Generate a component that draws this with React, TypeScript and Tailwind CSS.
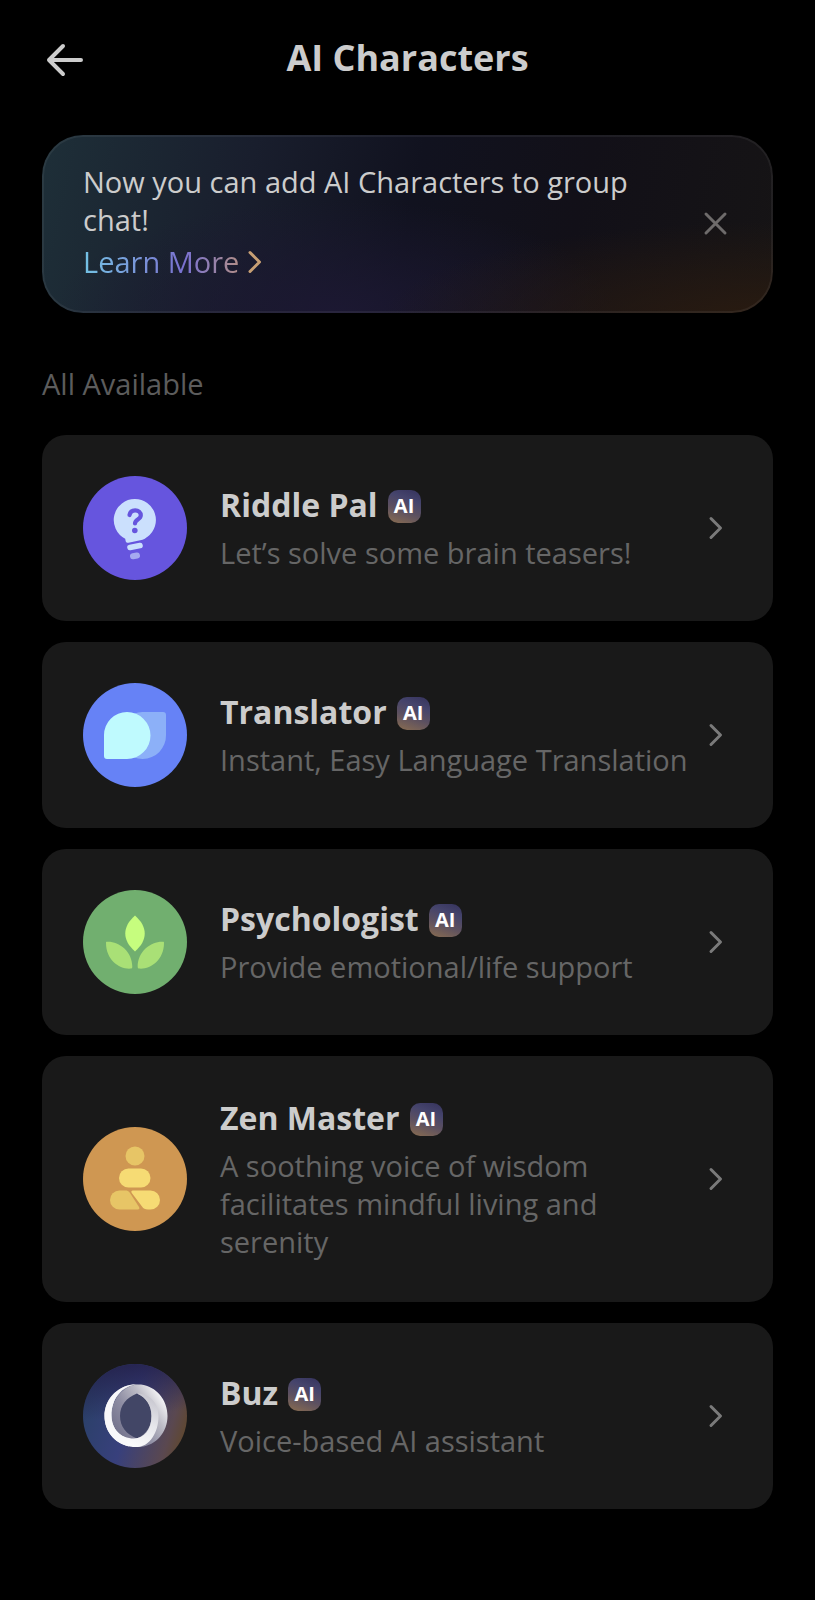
import type { ReactNode } from "react";

type Character = {
  name: string;
  description: string;
  avatar: ReactNode;
};

function RiddleAvatar() {
  return (
    <svg viewBox="0 0 104 104" className="size-26 shrink-0" aria-hidden="true">
      <circle cx="52" cy="52" r="52" fill="#6655de" />
      <path
        d="M52 23a21 21 0 0 1 12.500 37.800c-2.200 1.700-3.300 2.500-5 2.900l-14 3c-1.600.3-2.600-.4-2.900-2l-.4-2A21 21 0 0 1 52 23Z"
        fill="#cbe0fd"
      />
      <path
        d="M46.500 39c.6-3 2.800-4.700 5.700-4.700 3.300 0 5.600 2.100 5.600 5 0 4.300-5.800 4.200-5.800 8.200"
        fill="none"
        stroke="#6655de"
        strokeWidth="4.200"
        strokeLinecap="round"
      />
      <circle cx="51.800" cy="54.500" r="2.800" fill="#6655de" />
      <path d="M47 71.500l10-2" stroke="#cbe0fd" strokeWidth="5.600" strokeLinecap="round" />
      <path d="M50 80.300l4-.8" stroke="#a6a9f0" strokeWidth="6" strokeLinecap="round" />
    </svg>
  );
}

function TranslatorAvatar() {
  return (
    <svg viewBox="0 0 104 104" className="size-26 shrink-0" aria-hidden="true">
      <circle cx="52" cy="52" r="52" fill="#6682f6" />
      <path d="M60 29h20a3 3 0 0 1 3 3v20a23.500 23.500 0 1 1-23-23Z" fill="#8cb0f8" />
      <path d="M44 29a23.500 23.500 0 0 1 0 47H24a3 3 0 0 1-3-3V52a23 23 0 0 1 23-23Z" fill="#bffafe" />
    </svg>
  );
}

function PsychologistAvatar() {
  return (
    <svg viewBox="0 0 104 104" className="size-26 shrink-0" aria-hidden="true">
      <circle cx="52" cy="52" r="52" fill="#71af6f" />
      <path d="M52 25.500c13 11.500 13 24.500 0 36-13-11.500-13-24.500 0-36Z" fill="#c6fd7e" />
      <path d="M23 53c-.1-.8.2-1.200 1-1.200 11.500-.6 25.500 9.200 25.300 25.200-.1 1-.6 1.500-1.600 1.600C36.500 79.500 23 70 23 53Z" fill="#a9e076" />
      <path d="M81 53c.1-.8-.2-1.200-1-1.200-11.500-.6-25.500 9.200-25.300 25.200.1 1 .6 1.500 1.600 1.600C67.500 79.500 81 70 81 53Z" fill="#a9e076" />
    </svg>
  );
}

function ZenAvatar() {
  return (
    <svg viewBox="0 0 104 104" className="size-26 shrink-0" aria-hidden="true">
      <circle cx="52" cy="52" r="52" fill="#cf9752" />
      <circle cx="52" cy="29" r="9.500" fill="#e7c566" />
      <rect x="36" y="41.500" width="31.500" height="19" rx="9.500" fill="#f6db74" />
      <path d="M36.500 63.500H42c2.400 0 3.600.6 5 2.500l9 14c.8 1.400.4 2.500-1.300 2.500H36.500a9.500 9.500 0 0 1 0-19Z" fill="#e7c566" />
      <path d="M50 63.500h17.500a9.500 9.500 0 0 1 0 19H65c-3 0-4.500-.8-6-3L48.800 66c-.9-1.400-.5-2.500 1.200-2.500Z" fill="#f6db74" />
    </svg>
  );
}

function BuzAvatar() {
  return (
    <svg viewBox="0 0 104 104" className="size-26 shrink-0" aria-hidden="true">
      <defs>
        <linearGradient id="buz-bg" x1="0" y1="0.350" x2="1" y2="0.650">
          <stop offset="0" stopColor="#2a4068" />
          <stop offset="0.450" stopColor="#38407c" />
          <stop offset="0.850" stopColor="#5a4850" />
          <stop offset="1" stopColor="#60482e" />
        </linearGradient>
        <linearGradient id="buz-shade" x1="0.400" y1="0" x2="0.500" y2="1">
          <stop offset="0" stopColor="#24214c" stopOpacity="0.900" />
          <stop offset="0.500" stopColor="#24214c" stopOpacity="0" />
        </linearGradient>
        <linearGradient id="buz-back" x1="0" y1="0.800" x2="0.900" y2="0.100">
          <stop offset="0" stopColor="#6e6e88" />
          <stop offset="0.400" stopColor="#8e8da3" />
          <stop offset="0.700" stopColor="#bdbcc6" />
          <stop offset="1" stopColor="#ffffff" />
        </linearGradient>
        <linearGradient id="buz-front" x1="0.300" y1="1" x2="0.700" y2="0">
          <stop offset="0" stopColor="#ffffff" />
          <stop offset="0.500" stopColor="#e6e6eb" />
          <stop offset="1" stopColor="#bfbec8" />
        </linearGradient>
      </defs>
      <circle cx="52" cy="52" r="52" fill="url(#buz-bg)" />
      <circle cx="52" cy="52" r="52" fill="url(#buz-shade)" />
      <ellipse cx="53" cy="52" rx="17" ry="22" fill="#424666" />
      {/* far side of the ring */}
      <path
        d="M58 20.500c15 2 26.500 15 26.500 31.500S73 81 58 83H54c-14-1-25.500-14-25.500-31S40 22 54 20.500Zm-4 9C43.500 33.500 37 41.500 37 52s6.500 18.500 17 22.500C63.500 70.500 68.500 62 68.500 52S63.500 33.500 54 29.500Z"
        fill="url(#buz-back)"
        fillRule="evenodd"
      />
      {/* near side, wrapping left and under */}
      <path
        d="M50 20.500h5C39 22 28.500 35 28.500 51.500c0 13.500 9 23 22.500 23 10-.5 17.500-9 17.500-22.500 0-10-5-18.500-14.500-22.500 13 0 21.500 9.500 21.500 22.500 0 17-9 30-20.500 31h-5C33 81 21.500 68 21.500 52S33 22.500 50 20.500Z"
        fill="url(#buz-front)"
      />
      <path d="M50 20.500h3C38 22 28.500 35 28.500 51.500c0 10 5 18 13 21.500L46 82.500C31 79 21.500 67 21.500 52S33 22.500 50 20.500Z" fill="#f8f8fa" />
    </svg>
  );
}

const CHARACTERS: Character[] = [
  { name: "Riddle Pal", description: "Let’s solve some brain teasers!", avatar: <RiddleAvatar /> },
  { name: "Translator", description: "Instant, Easy Language Translation", avatar: <TranslatorAvatar /> },
  { name: "Psychologist", description: "Provide emotional/life support", avatar: <PsychologistAvatar /> },
  {
    name: "Zen Master",
    description: "A soothing voice of wisdom facilitates mindful living and serenity",
    avatar: <ZenAvatar />,
  },
  { name: "Buz", description: "Voice-based AI assistant", avatar: <BuzAvatar /> },
];

function Chevron({ className }: { className: string }) {
  return (
    <svg
      viewBox="0 0 32 32"
      className={className}
      fill="none"
      stroke="currentColor"
      strokeWidth="3"
      strokeLinecap="round"
      strokeLinejoin="round"
      aria-hidden="true"
    >
      <path d="M11 6.500 20.500 16 11 25.500" />
    </svg>
  );
}

function AiBadge() {
  return (
    <span className="mt-0.5 flex size-[33px] shrink-0 items-center justify-center rounded-[10px] bg-[linear-gradient(20deg,#8a6d50_0%,#5c5060_40%,#45446c_70%,#35325c_100%)] text-xl leading-none font-bold text-white">
      AI
    </span>
  );
}

function CharacterCard({ name, description, avatar }: Character) {
  return (
    <li>
      <a href="#" className="flex items-center rounded-3xl bg-[#191919] p-[41px]">
        {avatar}
        <div className="ml-[33px] min-w-0 flex-1 pr-2">
          <div className="flex items-center gap-2.5">
            <h2 className="text-[32px] leading-[42px] font-bold text-[#cccccc]">{name}</h2>
            <AiBadge />
          </div>
          <p className="mt-2 text-[29px] leading-[38px] text-[#666666]">{description}</p>
        </div>
        <Chevron className="size-8 shrink-0 text-[#7a7a7a]" />
      </a>
    </li>
  );
}

export default function App() {
  return (
    <div className="min-h-screen bg-black px-[42px] pb-20 font-['Open_Sans',sans-serif]">
      <header className="grid grid-cols-[48px_1fr_48px] items-center pt-8">
        <button type="button" aria-label="Back" className="text-[#cccccc]">
          <svg
            viewBox="0 0 48 48"
            className="size-12"
            fill="none"
            stroke="currentColor"
            strokeWidth="4"
            strokeLinecap="round"
            strokeLinejoin="round"
          >
            <path d="M39 26H7M21 12 7 26l14 14" />
          </svg>
        </button>
        <h1 className="text-center text-[36px] leading-[52px] font-bold text-[#cccccc]">AI Characters</h1>
      </header>

      <section className="mt-[51px] flex items-center rounded-[41px] bg-[radial-gradient(ellipse_at_100%_105%,#2a1b10_0%,transparent_38%),radial-gradient(ellipse_at_40%_100%,#1c1832_0%,transparent_45%),linear-gradient(102deg,#1e2f38_0%,#191e2d_28%,#11121f_50%,#121018_72%,#161415_100%)] px-[41px] pt-7 pb-8 inset-ring-2 inset-ring-white/6">
        <div className="flex-1 pr-12 text-[29px] leading-[38px]">
          <p className="text-[#cccccc]">Now you can add AI Characters to group chat!</p>
          <a href="#" className="mt-1 flex items-center">
            <span className="bg-linear-to-r from-[#72c2e4] via-[#7a70d0] via-65% to-[#b08c88] bg-clip-text text-transparent">
              Learn More
            </span>
            <Chevron className="size-8 text-[#c79f74]" />
          </a>
        </div>
        <button type="button" aria-label="Dismiss" className="text-[#6e6b6b]">
          <svg viewBox="0 0 32 32" className="size-8" fill="none" stroke="currentColor" strokeWidth="3" strokeLinecap="round">
            <path d="m6 8 19 19M25 8 6 27" />
          </svg>
        </button>
      </section>

      <p className="mt-[52px] text-[29px] leading-[38px] text-[#5c5c5c]">All Available</p>

      <ul className="mt-8 flex flex-col gap-[21px]">
        {CHARACTERS.map((character) => (
          <CharacterCard key={character.name} {...character} />
        ))}
      </ul>
    </div>
  );
}
